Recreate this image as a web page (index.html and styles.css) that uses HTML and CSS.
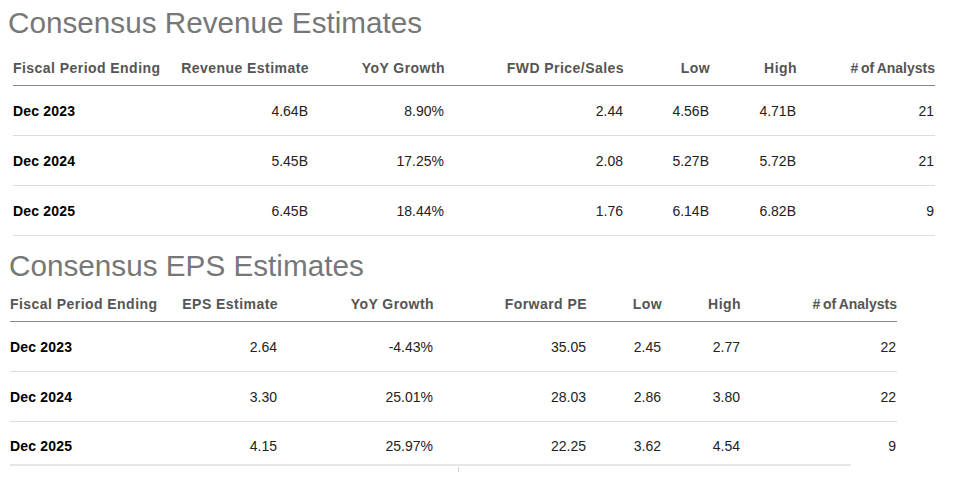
FILE: index.html
```html
<!DOCTYPE html>
<html>
<head>
<meta charset="utf-8">
<link rel="stylesheet" href="styles.css">
</head>
<body>
<section class="block block-rev">
  <h2 class="title">Consensus Revenue Estimates</h2>
  <table class="est est-rev">
    <colgroup>
      <col class="c157"><col class="c139"><col class="c136"><col class="c179"><col class="c86"><col class="c87"><col class="c138">
    </colgroup>
    <thead>
      <tr><th class="first">Fiscal Period Ending</th><th>Revenue Estimate</th><th>YoY Growth</th><th>FWD Price/Sales</th><th>Low</th><th>High</th><th class="analysts"># of Analysts</th></tr>
    </thead>
    <tbody>
      <tr><td class="first">Dec 2023</td><td>4.64B</td><td>8.90%</td><td>2.44</td><td>4.56B</td><td>4.71B</td><td>21</td></tr>
      <tr><td class="first">Dec 2024</td><td>5.45B</td><td>17.25%</td><td>2.08</td><td>5.27B</td><td>5.72B</td><td>21</td></tr>
      <tr><td class="first">Dec 2025</td><td>6.45B</td><td>18.44%</td><td>1.76</td><td>6.14B</td><td>6.82B</td><td>9</td></tr>
    </tbody>
  </table>
</section>
<section class="block block-eps">
  <h2 class="title">Consensus EPS Estimates</h2>
  <table class="est est-eps">
    <colgroup>
      <col class="c159"><col class="c109"><col class="c156"><col class="c153"><col class="c75"><col class="c79"><col class="c156">
    </colgroup>
    <thead>
      <tr><th class="first">Fiscal Period Ending</th><th>EPS Estimate</th><th>YoY Growth</th><th>Forward PE</th><th>Low</th><th>High</th><th class="analysts"># of Analysts</th></tr>
    </thead>
    <tbody>
      <tr><td class="first">Dec 2023</td><td>2.64</td><td>-4.43%</td><td>35.05</td><td>2.45</td><td>2.77</td><td>22</td></tr>
      <tr><td class="first">Dec 2024</td><td>3.30</td><td>25.01%</td><td>28.03</td><td>2.86</td><td>3.80</td><td>22</td></tr>
      <tr class="last"><td class="first">Dec 2025</td><td>4.15</td><td>25.97%</td><td>22.25</td><td>3.62</td><td>4.54</td><td>9</td></tr>
    </tbody>
  </table>
  <div class="footline"></div>
  <div class="tick"></div>
</section>
</body>
</html>
```
FILE: styles.css
```css
body {
  margin: 0;
  background: #fff;
  font-family: "Liberation Sans", Arial, sans-serif;
}

.title {
  margin: 0;
  font-size: 29.7px;
  line-height: 34px;
  font-weight: normal;
  color: #777;
}

.block-rev .title {
  margin: 6px 0 0 8px;
}

.block-eps .title {
  margin: 13px 0 0 9px;
}

.est {
  border-collapse: collapse;
  table-layout: fixed;
  font-size: 14px;
}

.est-rev {
  width: 922px;
  margin: 11px 0 0 13px;
}

.est-eps {
  width: 887px;
  margin: 4px 0 0 10px;
}

.c157 { width: 157px; }
.c139 { width: 139px; }
.c136 { width: 136px; }
.c179 { width: 179px; }
.c86 { width: 86px; }
.c87 { width: 87px; }
.c138 { width: 138px; }
.c159 { width: 159px; }
.c109 { width: 109px; }
.c156 { width: 156px; }
.c153 { width: 153px; }
.c75 { width: 75px; }
.c79 { width: 79px; }

.est th {
  height: 34px;
  padding: 0;
  text-align: right;
  vertical-align: middle;
  font-weight: bold;
  color: #555;
  letter-spacing: 0.45px;
  border-bottom: 1px solid #878787;
  white-space: nowrap;
}

.est th.analysts {
  letter-spacing: 0;
  word-spacing: -1px;
}

.est td {
  height: 49px;
  padding: 0 1px 0 0;
  text-align: right;
  vertical-align: middle;
  color: #222;
  border-bottom: 1px solid #dcdcdc;
  white-space: nowrap;
}

.est .first {
  text-align: left;
  padding: 0;
}

.est td.first {
  font-weight: bold;
  color: #000;
  letter-spacing: 0.2px;
}

.est tr.last td {
  border-bottom: none;
  height: 36px;
  padding-top: 6px;
}

.footline {
  width: 841px;
  height: 2px;
  margin-left: 10px;
  background: #e6e6e6;
}

.tick {
  width: 1px;
  height: 5px;
  margin: 1px 0 0 458px;
  background: #cfcfcf;
}
```
